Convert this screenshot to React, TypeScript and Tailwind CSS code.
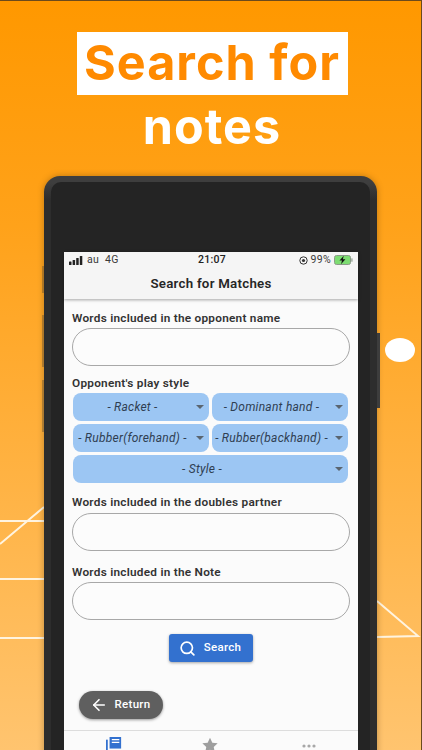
import { ArrowLeft, Search } from "lucide-react";

function Label({ children, className = "" }: { children: string; className?: string }) {
  return <div className={`text-[11.8px] leading-[14px] font-semibold tracking-[0.25px] text-[#333333] ${className}`}>{children}</div>;
}

function Field({ className = "" }: { className?: string }) {
  return <div className={`h-[38px] w-[278px] rounded-[19px] border border-[#a8a8a8] bg-[#fcfcfc] ${className}`} />;
}

function Select({ children, className = "" }: { children: string; className?: string }) {
  return (
    <div className={`relative flex h-[28px] items-center justify-center rounded-[8px] bg-[#9cc6f3] pr-[17px] text-[12px] italic tracking-[0.25px] text-[#2f3e52] ${className}`}>
      <span className="whitespace-nowrap">{children}</span>
      <span className="absolute right-[5px] top-[12px] h-0 w-0 border-x-[4px] border-t-[4.5px] border-x-transparent border-t-[#5a6570]" />
    </div>
  );
}

export default function App() {
  return (
    <div className="relative h-[750px] w-[422px] overflow-hidden border-t border-r border-[#6b4a1c] bg-[linear-gradient(180deg,#ff9800_0%,#ffa21a_30%,#ffc46f_100%)] font-['Roboto',sans-serif]">
      <svg className="absolute left-0 top-0" width="422" height="750" fill="none" stroke="#fff4e0" strokeWidth="2">
        <path d="M0 520H44M0 578H44M0 637H44M0 543L44 506" />
        <path d="M377 600L418 635L377 636" />
        <ellipse cx="400" cy="349" rx="15" ry="12" fill="#ffffff" stroke="none" />
      </svg>

      <div className="relative ml-[3px] flex flex-col items-center pt-[31px] font-['Inter',sans-serif] font-bold">
        <div className="flex h-[63px] w-[271px] items-center justify-center bg-white text-[48.5px] tracking-[1px] text-[#ff8a00]">Search for</div>
        <div className="mt-[3px] h-[58px] text-[48.5px] leading-[58px] tracking-[1px] text-white">notes</div>
      </div>

      <div className="relative ml-[44px] mt-[20px] h-[600px] w-[333px] rounded-t-[16px] bg-[linear-gradient(180deg,#3e3e3e_0px,#3e3e3e_7px,#2d2d2d_24px)] px-[7px] pt-[6px] shadow-[0_0_6px_rgba(60,40,10,0.35)]">
        <span className="absolute -left-[2px] top-[90px] h-[27px] w-[2px] bg-[#333333]/30" />
        <span className="absolute -left-[2px] top-[139px] h-[52px] w-[2px] bg-[#333333]/30" />
        <span className="absolute -left-[2px] top-[204px] h-[52px] w-[2px] bg-[#333333]/30" />
        <span className="absolute -right-[3px] top-[157px] h-[75px] w-[3px] bg-[#3d3d3d]" />
        <div className="h-full rounded-t-[10px] bg-[#242424] px-[13px] pt-[70px]">
          <div className="flex h-[498px] w-[294px] flex-col bg-[#fbfbfb]">
            <div className="z-10 bg-[#f5f5f5] shadow-[0_1px_3px_rgba(0,0,0,0.35)]">
              <div className="relative flex h-[16px] items-center px-[5px] text-[10.5px] tracking-[0.3px] text-[#3a3a3a]">
                <svg width="14" height="9" viewBox="0 0 14 9" fill="#222222">
                  <rect x="0" y="5.5" width="2.5" height="3.5" rx="0.5" />
                  <rect x="3.6" y="4" width="2.5" height="5" rx="0.5" />
                  <rect x="7.2" y="2" width="2.5" height="7" rx="0.5" />
                  <rect x="10.8" y="0" width="2.5" height="9" rx="0.5" />
                </svg>
                <span className="ml-[4px]">au</span>
                <span className="ml-[6px]">4G</span>
                <span className="absolute left-[134px] font-medium text-[#222222]">21:07</span>
                <div className="ml-auto flex items-center gap-[3px]">
                  <svg width="9" height="9" viewBox="0 0 9 9" fill="none" stroke="#333333">
                    <circle cx="4.5" cy="4.5" r="3.7" />
                    <circle cx="4.5" cy="4.5" r="1.6" fill="#333333" stroke="none" />
                  </svg>
                  <span>99%</span>
                  <svg width="19" height="10" viewBox="0 0 19 10">
                    <rect x="0.5" y="0.5" width="16" height="9" rx="2" fill="#7ddc72" stroke="#8a9a88" />
                    <rect x="17.2" y="3.2" width="1.4" height="3.6" rx="0.6" fill="#9aa89a" />
                    <path d="M9.8 0.8L5.5 5.6H8L7 9.2L11.4 4.2H8.8Z" fill="#111111" />
                  </svg>
                </div>
              </div>
              <div className="flex h-[31px] items-center justify-center text-[13.3px] font-semibold tracking-[0.25px] text-[#262626]">Search for Matches</div>
            </div>

            <div className="flex flex-1 flex-col px-[8px] pt-[12px]">
              <Label>Words included in the opponent name</Label>
              <Field className="mt-[3px]" />
              <Label className="mt-[10px]">Opponent's play style</Label>
              <div className="mt-[3px] ml-[1px] grid w-[275px] grid-cols-2 gap-x-[3px] gap-y-[3px]">
                <Select>- Racket -</Select>
                <Select>- Dominant hand -</Select>
                <Select>- Rubber(forehand) -</Select>
                <Select>- Rubber(backhand) -</Select>
                <Select className="col-span-2">- Style -</Select>
              </div>
              <Label className="mt-[12px]">Words included in the doubles partner</Label>
              <Field className="mt-[4px]" />
              <Label className="mt-[14px]">Words included in the Note</Label>
              <Field className="mt-[3px]" />
              <div className="ml-[97px] mt-[14px] flex h-[28px] w-[84px] items-center justify-center gap-[8px] rounded-[3px] bg-[#3371cf] pr-[2px] text-[11.5px] font-medium tracking-[0.3px] text-white shadow-[0_1px_3px_rgba(0,0,0,0.35)]">
                <Search size={17} strokeWidth={2.4} />
                <span>Search</span>
              </div>
              <div className="ml-[7px] mt-[29px] flex h-[28px] w-[84px] items-center justify-center gap-[7px] rounded-[14px] bg-[#5f5f5f] pr-[2px] text-[11.5px] font-medium tracking-[0.3px] text-white shadow-[0_1px_3px_rgba(0,0,0,0.4)]">
                <ArrowLeft size={18} strokeWidth={2.2} />
                <span>Return</span>
              </div>
            </div>

            <div className="flex h-[20px] justify-around overflow-hidden border-t border-[#dddddd] pt-[6px]">
              <svg width="16" height="16" viewBox="0 0 18 18" fill="#3371cf">
                <rect x="0" y="3" width="2" height="14" />
                <path d="M4 0H17V13H4Z" />
                <path d="M6.5 3H15M6.5 6H15" stroke="#ffffff" strokeWidth="1.4" />
              </svg>
              <svg className="-ml-[3px]" width="16" height="16" viewBox="0 0 24 24" fill="#9e9e9e">
                <path d="M12 1L15.5 8.5L23.5 9.5L17.6 15L19.2 23L12 19L4.8 23L6.4 15L0.5 9.5L8.5 8.5Z" />
              </svg>
              <svg className="mt-[7px]" width="14" height="4" viewBox="0 0 14 4" fill="#a8a8a8">
                <circle cx="2" cy="2" r="1.6" />
                <circle cx="7" cy="2" r="1.6" />
                <circle cx="12" cy="2" r="1.6" />
              </svg>
            </div>
          </div>
        </div>
      </div>
    </div>
  );
}
